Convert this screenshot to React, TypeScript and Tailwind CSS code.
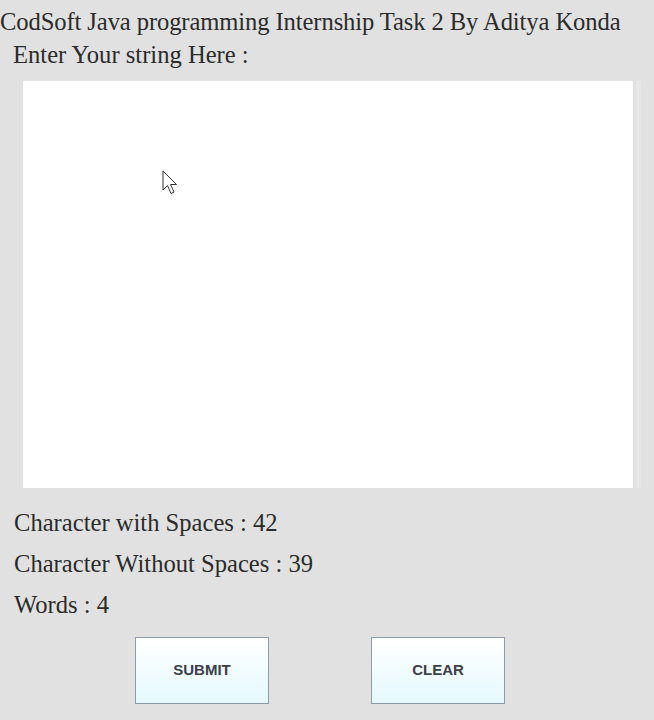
export default function App() {
  return (
    <div className="w-[654px] h-[720px] bg-[#e1e1e1] text-[#2b2b2b] font-['Liberation_Serif',serif] overflow-hidden">
      <div className="pt-[7px] text-[24.6px] leading-[30px] tracking-[-0.1px] whitespace-nowrap">
        CodSoft Java programming Internship Task 2 By Aditya Konda
      </div>
      <div className="pl-[13px] mt-[3px] text-[24.6px] leading-[30px]">Enter Your string Here :</div>
      <div className="flex mt-[11px]">
        <div className="ml-[23px] w-[610px] h-[407px] bg-white relative">
          <svg className="absolute left-[139px] top-[89px]" width="18" height="27" viewBox="0 0 18 27">
            <path d="M1 1 L1 20 L5.5 15.5 L9 23.5 L12 22 L8.5 14.5 L14.5 14.5 Z" fill="white" stroke="#333" strokeWidth="1" strokeLinejoin="miter" />
          </svg>
        </div>
        <div className="ml-[3px] w-[5px] h-[407px] bg-[#e7e7e7]"></div>
      </div>
      <div className="pl-[14px] mt-[21px] flex flex-col gap-[13px] text-[24.6px] leading-[28px]">
        <div>Character with Spaces : 42</div>
        <div>Character Without Spaces : 39</div>
        <div>Words : 4</div>
      </div>
      <div className="flex mt-[18px] pl-[135px] gap-[102px]">
        <button className="w-[134px] h-[67px] border border-[#8d9cab] bg-gradient-to-b from-white to-[#e4f9fe] font-['Liberation_Sans',sans-serif] font-bold text-[15px] text-[#3b4048]">
          SUBMIT
        </button>
        <button className="w-[134px] h-[67px] border border-[#8d9cab] bg-gradient-to-b from-white to-[#e4f9fe] font-['Liberation_Sans',sans-serif] font-bold text-[15px] text-[#3b4048]">
          CLEAR
        </button>
      </div>
    </div>
  );
}
